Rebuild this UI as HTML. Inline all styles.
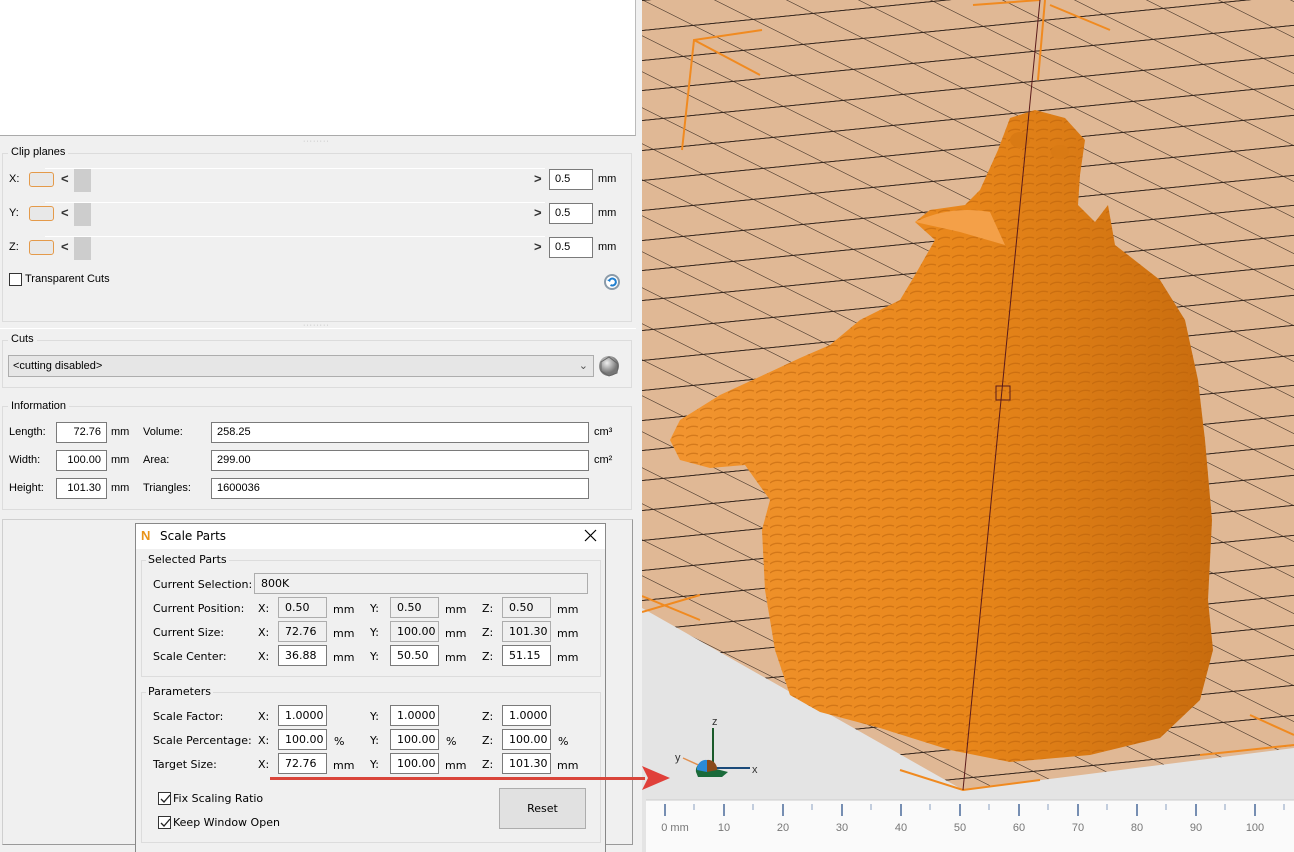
<!DOCTYPE html>
<html><head><meta charset="utf-8"><style>
*{box-sizing:border-box;margin:0;padding:0}
body{width:1294px;height:852px;overflow:hidden;background:#f0f0f0;font-family:"Liberation Sans",sans-serif;font-size:11px;color:#000;position:relative}
.a{position:absolute}
.inp{position:absolute;background:#fff;border:1px solid #7a7a7a;height:21px;line-height:19px;padding:0 5px;font-size:11px}
.grp{position:absolute;border:1px solid #dcdcdc}
.lbl{position:absolute;font-size:11px;white-space:nowrap}
.ob{position:absolute;width:25px;height:15px;border:1.5px solid #e49a4a;border-radius:3px;background:#e8e8e8}
.cb{position:absolute;width:13px;height:13px;border:1px solid #333;background:#fff}
.ri{position:absolute;background:#fff;border:1px solid #7a7a7a;height:21px;line-height:19px;padding:0 6px;font-family:"DejaVu Sans",sans-serif;font-size:11px}
.ri.g{background:#f0f0f0;border-color:#adadad}
.dl{position:absolute;font-family:"DejaVu Sans",sans-serif;font-size:11px;white-space:nowrap}
.chev{position:absolute;font-size:13px;font-weight:bold;color:#333}
</style></head><body>
<div class="a" style="left:0;top:0;width:636px;height:136px;background:#fff;border-right:1px solid #bbb;border-bottom:1px solid #aaa"></div>
<div class="a" style="left:303px;top:138px;color:#aaa;font-size:7px;letter-spacing:1px">········</div>
<div class="grp" style="left:2px;top:153px;width:630px;height:169px"></div>
<div class="lbl" style="left:8px;top:146px;background:#f0f0f0;padding:0 3px">Clip planes</div>

<div class="lbl" style="left:9px;top:173px">X:</div>
<div class="ob" style="left:29px;top:172px"></div>
<div class="a" style="left:45px;top:168px;width:500px;height:24px;border-top:1px solid #fff"></div>
<div class="chev" style="left:61px;top:171px">&lt;</div>
<div class="a" style="left:74px;top:169px;width:17px;height:23px;background:#cdcdcd"></div>
<div class="chev" style="left:534px;top:171px">&gt;</div>
<div class="inp" style="left:549px;top:169px;width:44px">0.5</div>
<div class="lbl" style="left:598px;top:173px">mm</div>

<div class="lbl" style="left:9px;top:207px">Y:</div>
<div class="ob" style="left:29px;top:206px"></div>
<div class="a" style="left:45px;top:202px;width:500px;height:24px;border-top:1px solid #fff"></div>
<div class="chev" style="left:61px;top:205px">&lt;</div>
<div class="a" style="left:74px;top:203px;width:17px;height:23px;background:#cdcdcd"></div>
<div class="chev" style="left:534px;top:205px">&gt;</div>
<div class="inp" style="left:549px;top:203px;width:44px">0.5</div>
<div class="lbl" style="left:598px;top:207px">mm</div>

<div class="lbl" style="left:9px;top:241px">Z:</div>
<div class="ob" style="left:29px;top:240px"></div>
<div class="a" style="left:45px;top:236px;width:500px;height:24px;border-top:1px solid #fff"></div>
<div class="chev" style="left:61px;top:239px">&lt;</div>
<div class="a" style="left:74px;top:237px;width:17px;height:23px;background:#cdcdcd"></div>
<div class="chev" style="left:534px;top:239px">&gt;</div>
<div class="inp" style="left:549px;top:237px;width:44px">0.5</div>
<div class="lbl" style="left:598px;top:241px">mm</div>

<div class="cb" style="left:9px;top:273px"></div>
<div class="lbl" style="left:25px;top:273px">Transparent Cuts</div>
<svg class="a" style="left:603px;top:273px" width="18" height="18"><circle cx="9" cy="9" r="8" fill="#8a9aa8"/><circle cx="9" cy="9" r="6" fill="#fff"/><path d="M6 8a3.5 3.5 0 1 1 1.5 4" stroke="#1f7fd0" stroke-width="2" fill="none"/><path d="M4 7l3 2 1-3z" fill="#1f7fd0"/></svg>

<div class="a" style="left:303px;top:322px;color:#aaa;font-size:7px;letter-spacing:1px">········</div>
<div class="a" style="left:0;top:328px;width:636px;height:1px;background:#fff"></div>
<div class="grp" style="left:2px;top:340px;width:630px;height:48px"></div>
<div class="lbl" style="left:8px;top:333px;background:#f0f0f0;padding:0 3px">Cuts</div>
<div class="a" style="left:8px;top:355px;width:586px;height:22px;background:#e6e6e6;border:1px solid #adadad;padding:0 4px;line-height:20px">&lt;cutting disabled&gt;<span style="position:absolute;right:5px;top:0;color:#555">⌄</span></div>
<svg class="a" style="left:597px;top:354px" width="24" height="24"><defs><radialGradient id="sg" cx="0.4" cy="0.35"><stop offset="0" stop-color="#eee"/><stop offset="1" stop-color="#777"/></radialGradient></defs><circle cx="12" cy="12" r="10" fill="url(#sg)"/><path d="M4 8l8-5 9 7-1 9-8 3-8-5z" fill="none" stroke="#666" stroke-width="1"/></svg>

<div class="grp" style="left:2px;top:406px;width:630px;height:104px"></div>
<div class="lbl" style="left:8px;top:400px;background:#f0f0f0;padding:0 3px">Information</div>
<div class="lbl" style="left:9px;top:426px">Length:</div><div class="inp" style="left:56px;top:422px;width:51px;text-align:right">72.76</div><div class="lbl" style="left:111px;top:426px">mm</div>
<div class="lbl" style="left:9px;top:454px">Width:</div><div class="inp" style="left:56px;top:450px;width:51px;text-align:right">100.00</div><div class="lbl" style="left:111px;top:454px">mm</div>
<div class="lbl" style="left:9px;top:482px">Height:</div><div class="inp" style="left:56px;top:478px;width:51px;text-align:right">101.30</div><div class="lbl" style="left:111px;top:482px">mm</div>
<div class="lbl" style="left:143px;top:426px">Volume:</div><div class="inp" style="left:211px;top:422px;width:378px">258.25</div><div class="lbl" style="left:594px;top:426px">cm³</div>
<div class="lbl" style="left:143px;top:454px">Area:</div><div class="inp" style="left:211px;top:450px;width:378px">299.00</div><div class="lbl" style="left:594px;top:454px">cm²</div>
<div class="lbl" style="left:143px;top:482px">Triangles:</div><div class="inp" style="left:211px;top:478px;width:378px">1600036</div>
<div class="a" style="left:2px;top:519px;width:631px;height:326px;border:1px solid #cfcfcf;border-right-color:#999;border-bottom-color:#999"></div>
<div class="a" style="left:636px;top:0;width:6px;height:852px;background:#f0f0f0"></div>

<div class="a" style="left:135px;top:523px;width:471px;height:329px;background:#f0f0f0;border:1px solid #888;border-bottom:none"></div>
<div class="a" style="left:136px;top:524px;width:469px;height:25px;background:#fff"></div>
<div class="a" style="left:141px;top:528px;font-weight:bold;color:#e89318;font-size:13px">N</div>
<div class="dl" style="left:160px;top:529px;font-size:12px">Scale Parts</div>
<svg class="a" style="left:584px;top:529px" width="13" height="13"><path d="M1 1L12 12M12 1L1 12" stroke="#000" stroke-width="1.2"/></svg>

<div class="grp" style="left:141px;top:560px;width:460px;height:117px"></div>
<div class="dl" style="left:146px;top:553px;background:#f0f0f0;padding:0 2px">Selected Parts</div>
<div class="dl" style="left:153px;top:578px">Current Selection:</div>
<div class="ri g" style="left:254px;top:573px;width:334px">800K</div>
<div class="dl" style="left:153px;top:602px">Current Position:</div>
<div class="dl" style="left:153px;top:626px">Current Size:</div>
<div class="dl" style="left:153px;top:650px">Scale Center:</div>

<div class="grp" style="left:141px;top:692px;width:460px;height:151px"></div>
<div class="dl" style="left:146px;top:685px;background:#f0f0f0;padding:0 2px">Parameters</div>
<div class="dl" style="left:153px;top:710px">Scale Factor:</div>
<div class="dl" style="left:153px;top:734px">Scale Percentage:</div>
<div class="dl" style="left:153px;top:758px">Target Size:</div>

<div class="dl" style="left:258px;top:602px">X:</div><div class="ri g" style="left:278px;top:597px;width:49px">0.50</div><div class="dl" style="left:333px;top:603px">mm</div>
<div class="dl" style="left:370px;top:602px">Y:</div><div class="ri g" style="left:390px;top:597px;width:49px">0.50</div><div class="dl" style="left:445px;top:603px">mm</div>
<div class="dl" style="left:482px;top:602px">Z:</div><div class="ri g" style="left:502px;top:597px;width:49px">0.50</div><div class="dl" style="left:557px;top:603px">mm</div>

<div class="dl" style="left:258px;top:626px">X:</div><div class="ri g" style="left:278px;top:621px;width:49px">72.76</div><div class="dl" style="left:333px;top:627px">mm</div>
<div class="dl" style="left:370px;top:626px">Y:</div><div class="ri g" style="left:390px;top:621px;width:49px">100.00</div><div class="dl" style="left:445px;top:627px">mm</div>
<div class="dl" style="left:482px;top:626px">Z:</div><div class="ri g" style="left:502px;top:621px;width:49px">101.30</div><div class="dl" style="left:557px;top:627px">mm</div>

<div class="dl" style="left:258px;top:650px">X:</div><div class="ri" style="left:278px;top:645px;width:49px">36.88</div><div class="dl" style="left:333px;top:651px">mm</div>
<div class="dl" style="left:370px;top:650px">Y:</div><div class="ri" style="left:390px;top:645px;width:49px">50.50</div><div class="dl" style="left:445px;top:651px">mm</div>
<div class="dl" style="left:482px;top:650px">Z:</div><div class="ri" style="left:502px;top:645px;width:49px">51.15</div><div class="dl" style="left:557px;top:651px">mm</div>

<div class="dl" style="left:258px;top:710px">X:</div><div class="ri" style="left:278px;top:705px;width:49px">1.0000</div>
<div class="dl" style="left:370px;top:710px">Y:</div><div class="ri" style="left:390px;top:705px;width:49px">1.0000</div>
<div class="dl" style="left:482px;top:710px">Z:</div><div class="ri" style="left:502px;top:705px;width:49px">1.0000</div>

<div class="dl" style="left:258px;top:734px">X:</div><div class="ri" style="left:278px;top:729px;width:49px">100.00</div><div class="dl" style="left:334px;top:735px">%</div>
<div class="dl" style="left:370px;top:734px">Y:</div><div class="ri" style="left:390px;top:729px;width:49px">100.00</div><div class="dl" style="left:446px;top:735px">%</div>
<div class="dl" style="left:482px;top:734px">Z:</div><div class="ri" style="left:502px;top:729px;width:49px">100.00</div><div class="dl" style="left:558px;top:735px">%</div>

<div class="dl" style="left:258px;top:758px">X:</div><div class="ri" style="left:278px;top:753px;width:49px">72.76</div><div class="dl" style="left:333px;top:759px">mm</div>
<div class="dl" style="left:370px;top:758px">Y:</div><div class="ri" style="left:390px;top:753px;width:49px">100.00</div><div class="dl" style="left:445px;top:759px">mm</div>
<div class="dl" style="left:482px;top:758px">Z:</div><div class="ri" style="left:502px;top:753px;width:49px">101.30</div><div class="dl" style="left:557px;top:759px">mm</div>

<div class="cb" style="left:158px;top:792px"></div><svg class="a" style="left:159px;top:793px" width="12" height="12"><path d="M2 6l3 3 6-7" stroke="#222" stroke-width="1.3" fill="none"/></svg>
<div class="dl" style="left:173px;top:792px">Fix Scaling Ratio</div>
<div class="cb" style="left:158px;top:816px"></div><svg class="a" style="left:159px;top:817px" width="12" height="12"><path d="M2 6l3 3 6-7" stroke="#222" stroke-width="1.3" fill="none"/></svg>
<div class="dl" style="left:173px;top:816px">Keep Window Open</div>
<div class="a" style="left:499px;top:788px;width:87px;height:41px;background:#e1e1e1;border:1px solid #adadad;text-align:center;line-height:39px;font-family:'DejaVu Sans',sans-serif;font-size:11px">Reset</div>

<svg class="a" style="left:642px;top:0" width="652" height="852" viewBox="642 0 652 852">
<defs>
<pattern id="grid" patternUnits="userSpaceOnUse" width="100" height="100" patternTransform="matrix(0.6 -0.06 0.5 0.25 642 0)">
<rect width="100" height="100" fill="#e0b895"/>
<rect width="100" height="3.5" fill="#3a2a20"/>
<rect width="1.7" height="100" fill="#3a2a20"/>
</pattern>
<clipPath id="plate"><polygon points="642,0 1294,0 1294,748 963,790 642,608"/></clipPath>
<linearGradient id="og" x1="0" y1="0" x2="1" y2="0"><stop offset="0" stop-color="#f29530"/><stop offset="0.55" stop-color="#e8861a"/><stop offset="1" stop-color="#c86c0e"/></linearGradient>
<pattern id="fur" patternUnits="userSpaceOnUse" width="14" height="9"><path d="M0 6q5-4 12-2" stroke="#b8600a" stroke-width="1.3" fill="none" opacity="0.5"/></pattern>
</defs>
<rect x="642" y="0" width="652" height="852" fill="#e4e4e4"/>
<rect x="642" y="0" width="652" height="800" fill="url(#grid)" clip-path="url(#plate)"/>
<g stroke="#f08a20" stroke-width="2" fill="none">
<path d="M682 150L694 40L762 30M694 40L760 75"/>
<path d="M973 5L1040 0M1045 0L1038 80M1050 5L1110 30"/>
<path d="M642 612L700 595M642 596L700 620"/>
<path d="M900 770L963 790L1040 780"/>
<path d="M1250 715L1294 735M1200 755L1294 745"/>
</g>
<path id="body" d="M670 440L680 420L720 395L770 372L800 358L830 345L860 320L900 300L915 275L935 240L915 222L930 210L965 205L980 190L998 150L1010 118L1035 110L1065 118L1085 140L1080 175L1078 205L1095 222L1108 205L1115 245L1128 255L1160 280L1185 320L1198 380L1205 440L1212 520L1208 600L1213 650L1200 700L1160 738L1090 755L1010 762L950 750L880 728L820 712L790 695L775 650L765 590L762 530L770 500L745 465L710 468L680 460Z" fill="url(#og)"/>
<path d="M670 440L680 420L720 395L770 372L800 358L830 345L860 320L900 300L915 275L935 240L915 222L930 210L965 205L980 190L998 150L1010 118L1035 110L1065 118L1085 140L1080 175L1078 205L1095 222L1108 205L1115 245L1128 255L1160 280L1185 320L1198 380L1205 440L1212 520L1208 600L1213 650L1200 700L1160 738L1090 755L1010 762L950 750L880 728L820 712L790 695L775 650L765 590L762 530L770 500L745 465L710 468L680 460Z" fill="url(#fur)"/>
<path d="M915 222Q950 205 990 212L1005 245L960 232Z" fill="#f4a048"/>
<ellipse cx="1020" cy="140" rx="10" ry="8" fill="#d97a14"/>
<ellipse cx="1060" cy="152" rx="9" ry="7" fill="#d97a14"/>
<line x1="1040" y1="0" x2="963" y2="790" stroke="#5a1a1a" stroke-width="1"/>
<rect x="996" y="386" width="14" height="14" fill="none" stroke="#5a1a1a" stroke-width="1"/>
<line x1="713" y1="770" x2="713" y2="728" stroke="#1a5a2a" stroke-width="2"/>
<line x1="713" y1="768" x2="750" y2="768" stroke="#1a4a7a" stroke-width="2"/>
<line x1="683" y1="758" x2="705" y2="768" stroke="#e09050" stroke-width="1.5"/>
<path d="M696 772a10 9 0 0 1 20-3l12 3-6 5-24 0z" fill="#1a6a3a"/>
<path d="M697 770a9 9 0 0 1 10-10l0 12z" fill="#2a8ad8"/>
<path d="M707 760a9 9 0 0 1 10 10l-10 2z" fill="#8a4a1a"/>
<text x="712" y="725" font-family="Liberation Sans" font-size="11" fill="#333">z</text>
<text x="675" y="761" font-family="Liberation Sans" font-size="11" fill="#333">y</text>
<text x="752" y="773" font-family="Liberation Sans" font-size="11" fill="#333">x</text>
<polygon points="642,766 670,778 642,790 648,778" fill="#e0403a"/>
<rect x="646" y="800" width="648" height="52" fill="#fafafa"/>
<line x1="646" y1="800" x2="1294" y2="800" stroke="#ccc"/>
<g stroke="#4a6a9a" stroke-width="1.5">
<line x1="665" y1="804" x2="665" y2="816"/><line x1="724" y1="804" x2="724" y2="816"/><line x1="783" y1="804" x2="783" y2="816"/><line x1="842" y1="804" x2="842" y2="816"/><line x1="901" y1="804" x2="901" y2="816"/><line x1="960" y1="804" x2="960" y2="816"/><line x1="1019" y1="804" x2="1019" y2="816"/><line x1="1078" y1="804" x2="1078" y2="816"/><line x1="1137" y1="804" x2="1137" y2="816"/><line x1="1196" y1="804" x2="1196" y2="816"/><line x1="1255" y1="804" x2="1255" y2="816"/>
</g>
<g stroke="#8aa0c0" stroke-width="1">
<line x1="694" y1="804" x2="694" y2="810"/><line x1="753" y1="804" x2="753" y2="810"/><line x1="812" y1="804" x2="812" y2="810"/><line x1="871" y1="804" x2="871" y2="810"/><line x1="930" y1="804" x2="930" y2="810"/><line x1="989" y1="804" x2="989" y2="810"/><line x1="1048" y1="804" x2="1048" y2="810"/><line x1="1107" y1="804" x2="1107" y2="810"/><line x1="1166" y1="804" x2="1166" y2="810"/><line x1="1225" y1="804" x2="1225" y2="810"/><line x1="1284" y1="804" x2="1284" y2="810"/>
</g>
<g font-family="Liberation Sans" font-size="11" fill="#777" text-anchor="middle">
<text x="675" y="831">0 mm</text><text x="724" y="831">10</text><text x="783" y="831">20</text><text x="842" y="831">30</text><text x="901" y="831">40</text><text x="960" y="831">50</text><text x="1019" y="831">60</text><text x="1078" y="831">70</text><text x="1137" y="831">80</text><text x="1196" y="831">90</text><text x="1255" y="831">100</text>
</g>
</svg>
<div class="a" style="left:270px;top:777px;width:375px;height:3px;background:#d9453a"></div>
</body></html>
